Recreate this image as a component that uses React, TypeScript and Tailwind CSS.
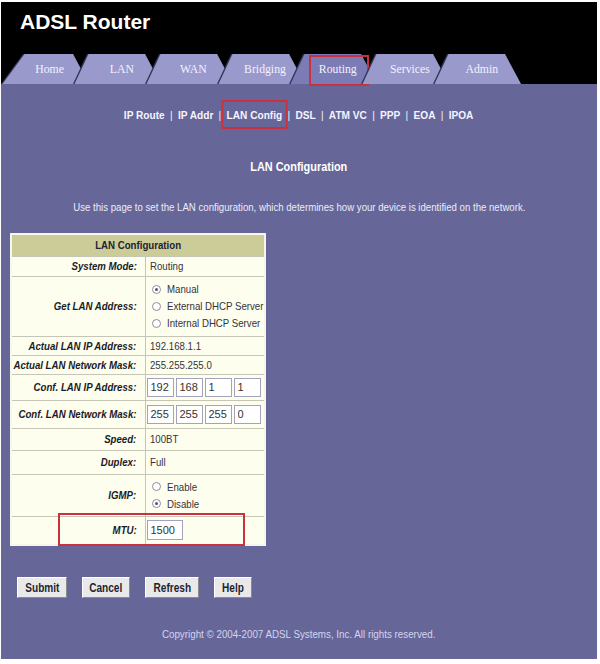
import clsx from 'clsx'
import type { ReactNode } from 'react'

const SANS = "font-['Liberation_Sans',Arial,sans-serif]"

const TABS = ['Home', 'LAN', 'WAN', 'Bridging', 'Routing', 'Services', 'Admin']
const SUBNAV = ['IP Route', 'IP Addr', 'LAN Config', 'DSL', 'ATM VC', 'PPP', 'EOA', 'IPOA']

// squeezed text: the original page font is a narrow Tahoma
function Sq({
  children,
  o = 'origin-center',
  s = 'scale-x-[0.84]',
}: {
  children: ReactNode
  o?: string
  s?: string
}) {
  return <span className={clsx('inline-block shrink-0 whitespace-nowrap', s, o)}>{children}</span>
}

function Tab({ label, index }: { label: string; index: number }) {
  const active = label === 'Routing'
  const first = index === 0
  return (
    <div className="relative -mr-[16px] h-[30px] w-[88px] shrink-0">
      <div
        className={clsx(
          'absolute inset-0 bg-[#34345a]',
          first
            ? '[clip-path:polygon(22px_0,72px_0,88px_100%,0_100%)]'
            : '[clip-path:polygon(14px_0,72px_0,88px_100%,0_100%)]',
        )}
      />
      <div
        className={clsx(
          'absolute inset-0',
          active ? 'bg-[#7b7bb6]' : 'bg-[#9999cc]',
          first
            ? '[clip-path:polygon(23.5px_0,72px_0,88px_100%,1.5px_100%)]'
            : '[clip-path:polygon(15.5px_0,72px_0,88px_100%,1.5px_100%)]',
        )}
      />
      <span className="relative flex h-full items-center justify-center pl-[9px] font-['Liberation_Serif',serif] text-[13.5px] text-[#f2f2ff]">
        <span className="scale-x-[0.87]">{label}</span>
      </span>
      {active && <span className="absolute left-[20px] top-[1px] h-[31px] w-[60px] border-2 border-[#c8323f]" />}
    </div>
  )
}

type Row = {
  label: string
  h: string
  value: ReactNode
  tight?: boolean
}

function Radio({ checked, label }: { checked?: boolean; label: string }) {
  return (
    <div className="flex h-[17px] items-center">
      <span className="ml-[2px] mr-[6px] flex h-[9px] w-[9px] shrink-0 items-center justify-center rounded-full border border-[#8d8da6] bg-white">
        {checked && <span className="h-[3px] w-[3px] rounded-full bg-[#55556a]" />}
      </span>
      <Sq o="origin-left">{label}</Sq>
    </div>
  )
}

function Box({ value, w = 'w-[27px]', h = 'h-[19px]' }: { value: string; w?: string; h?: string }) {
  return (
    <input
      readOnly
      value={value}
      className={clsx(w, h, 'border border-[#a3a3c0] bg-white px-[3px] text-[11px] text-[#333] outline-none')}
    />
  )
}

const ROWS: Row[] = [
  { label: 'System Mode:', h: 'h-[20px]', value: 'Routing' },
  {
    label: 'Get LAN Address:',
    h: 'h-[60px]',
    value: (
      <div className="flex flex-col">
        <Radio checked label="Manual" />
        <Radio label="External DHCP Server" />
        <Radio label="Internal DHCP Server" />
      </div>
    ),
  },
  { label: 'Actual LAN IP Address:', h: 'h-[19px]', value: '192.168.1.1' },
  { label: 'Actual LAN Network Mask:', h: 'h-[19px]', value: '255.255.255.0' },
  {
    label: 'Conf. LAN IP Address:',
    h: 'h-[26px]',
    tight: true,
    value: (
      <div className="flex gap-[2px]">
        <Box value="192" />
        <Box value="168" />
        <Box value="1" />
        <Box value="1" />
      </div>
    ),
  },
  {
    label: 'Conf. LAN Network Mask:',
    h: 'h-[28px]',
    tight: true,
    value: (
      <div className="flex gap-[2px]">
        <Box value="255" />
        <Box value="255" />
        <Box value="255" />
        <Box value="0" />
      </div>
    ),
  },
  { label: 'Speed:', h: 'h-[22px]', value: '100BT' },
  { label: 'Duplex:', h: 'h-[24px]', value: 'Full' },
  {
    label: 'IGMP:',
    h: 'h-[42px]',
    value: (
      <div className="flex flex-col">
        <Radio label="Enable" />
        <Radio checked label="Disable" />
      </div>
    ),
  },
  { label: 'MTU:', h: 'h-[28px]', tight: true, value: <Box value="1500" w="w-[36px]" h="h-[20px]" /> },
]

function ConfigTable() {
  return (
    <div className="relative ml-[9px] mt-[19px] w-[256px] border-2 border-[#f6f6ea] bg-[#fefeee]">
      <table className="w-full table-fixed border-collapse border-hidden text-[11.5px] leading-[14px]">
        <colgroup>
          <col className="w-[133px]" />
          <col />
        </colgroup>
        <tbody>
          <tr className="h-[21px]">
            <td colSpan={2} className="border border-[#c6c6b6] bg-[#cccc99] p-0 font-bold text-[#222233]">
              <div className="flex justify-center">
                <Sq>LAN Configuration</Sq>
              </div>
            </td>
          </tr>
          {ROWS.map(r => (
            <tr key={r.label} className={r.h}>
              <td className="border border-[#c6c6b6] p-0 pr-[8px] font-bold italic text-[#1a1a28]">
                <div className="flex justify-end">
                  <Sq o="origin-right">{r.label}</Sq>
                </div>
              </td>
              <td className={clsx('border border-[#c6c6b6] p-0 text-[#333340]', r.tight ? 'pl-[1px]' : 'pl-[4px]')}>
                {typeof r.value === 'string' ? <Sq o="origin-left">{r.value}</Sq> : r.value}
              </td>
            </tr>
          ))}
        </tbody>
      </table>
      <div className="absolute left-[46px] top-[278px] h-[33px] w-[187px] border-2 border-[#c8323f]" />
    </div>
  )
}

export default function App() {
  return (
    <div className={clsx('h-[664px] w-[600px] overflow-hidden bg-white pl-[1px] pt-[2px]', SANS)}>
      <div className="flex h-[657px] w-[596px] flex-col overflow-hidden bg-[#666699]">
        {/* Header */}
        <div className="flex flex-col bg-black pt-[8px]">
          <h1 className="pl-[19px] text-[21px] font-bold leading-[24px] text-white">ADSL Router</h1>
          <div className="mt-[20px] flex">
            {TABS.map((t, i) => (
              <Tab key={t} label={t} index={i} />
            ))}
          </div>
        </div>

        {/* Sub nav */}
        <div className="mt-[23px] flex justify-center text-[11.5px] font-bold leading-[16px] text-[#f4f4ff]">
          <div className="flex shrink-0 scale-x-[0.88] items-center whitespace-nowrap">
            {SUBNAV.map((s, i) => (
              <span key={s} className="flex items-center">
                {i > 0 && <span className="mx-[6px] font-normal">|</span>}
                <span className="relative">
                  {s}
                  {s === 'LAN Config' && (
                    <span className="absolute -bottom-[6px] -left-[6px] -right-[6px] -top-[7px] border-2 border-[#c8323f]" />
                  )}
                </span>
              </span>
            ))}
          </div>
        </div>

        <div className="mt-[36px] flex justify-center text-[13px] font-bold leading-[16px] text-white">
          <Sq>LAN Configuration</Sq>
        </div>

        <div className="mt-[25px] flex justify-center text-[11px] leading-[14px] text-[#ececfa]">
          <Sq s="scale-x-[0.875]">
            Use this page to set the LAN configuration, which determines how your device is identified on the network.
          </Sq>
        </div>

        <ConfigTable />

        {/* Buttons */}
        <div className="ml-[16px] mt-[31px] flex gap-[15px]">
          {[
            ['Submit', 'w-[50px]'],
            ['Cancel', 'w-[48px]'],
            ['Refresh', 'w-[54px]'],
            ['Help', 'w-[38px]'],
          ].map(([b, w]) => (
            <button
              key={b}
              type="button"
              className={clsx(
                w,
                'flex h-[21px] items-center justify-center border border-b-[#8a8a8a] border-l-white border-r-[#8a8a8a] border-t-white bg-[#e9e9e9] text-[12px] font-bold text-[#1f1f2f]',
              )}
            >
              <Sq>{b}</Sq>
            </button>
          ))}
        </div>

        <div className="mt-[29px] flex justify-center text-[11px] leading-[14px] text-[#d4d4f0]">
          <Sq s="scale-x-[0.89]">Copyright © 2004-2007 ADSL Systems, Inc. All rights reserved.</Sq>
        </div>
      </div>
    </div>
  )
}
